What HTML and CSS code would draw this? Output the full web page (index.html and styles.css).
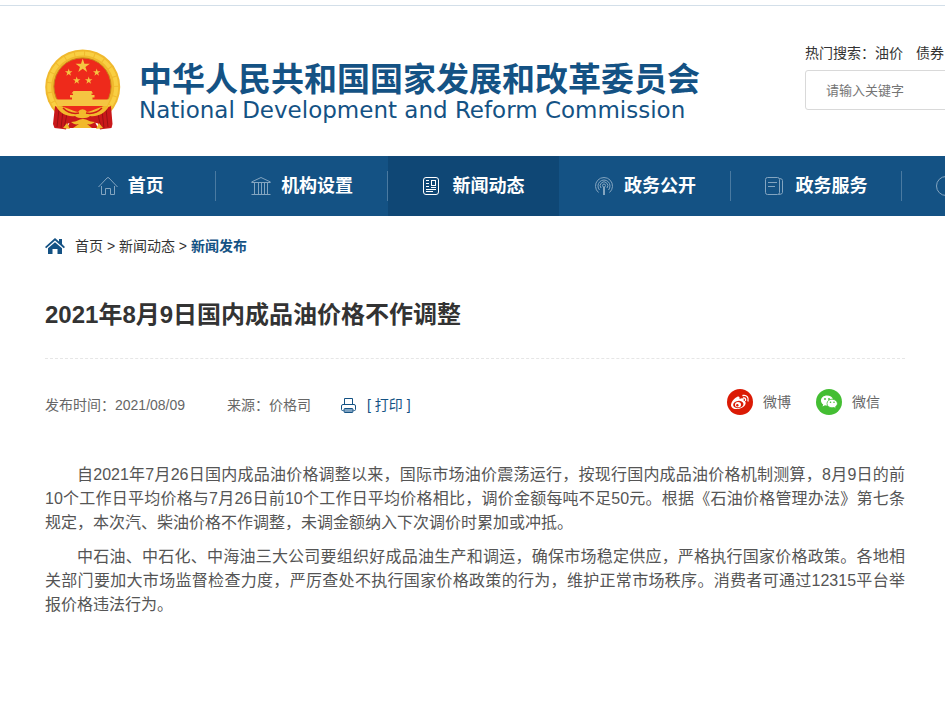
FILE: index.html
```html
<!DOCTYPE html>
<html lang="zh-CN">
<head>
  <meta charset="UTF-8">
  <title>2021年8月9日国内成品油价格不作调整</title>
  <link rel="stylesheet" href="styles.css">
</head>
<body>

  <header class="header">
    <div class="header-inner">
      <a class="logo" href="#">
        <svg class="emblem" viewBox="0 0 76 81" aria-hidden="true">
          <defs>
            <path id="star" d="M0-1L.225-.309H.951L.363.118.588.809 0 .382-.588.809-.363.118-.951-.309H-.225Z"/>
          </defs>
          <circle cx="37.7" cy="38" r="37.5" fill="#f0b92e"/>
          <circle cx="37.7" cy="38" r="33.500" fill="none" stroke="#f9cf42" stroke-width="4" stroke-dasharray="9 1"/>
          <circle cx="37.5" cy="37.5" r="28.6" fill="#ee2a1b" stroke="#c98418" stroke-width="1"/>
          <g fill="#f5c542">
            <use href="#star" transform="translate(37.7 17) scale(7.5)"/>
            <use href="#star" transform="translate(23.7 23.5) scale(3.9)"/>
            <use href="#star" transform="translate(51.7 23.5) scale(3.9)"/>
            <use href="#star" transform="translate(31.7 31.5) scale(3.9)"/>
            <use href="#star" transform="translate(43.7 31.5) scale(3.9)"/>
            <path d="M28.500 42h18l1.500 2.500h-1.500V46h3v2.500h-2v2H65L62 57H13l-3-6.500h17v-2h-2V46h3v-1.500h-1.500Z"/>
          </g>
          <path d="M10 57l12 5 15.500 6L53 62l13-5 1.500 18-1 4-8.500 1-3 .5-2-6-15-4-15 4-2 6-3-.5-8.500-1-1.500-4Z" fill="#c9181a"/>
          <path d="M14 60l-2 18M18 62l-2 17M22 65l-3 14M61 60l2 18M57 62l2 17M53 65l3 14" stroke="#8f0f12" stroke-width=".8"/>
          <path d="M11 57c10 0 16 5 22 6a5 5 0 0 1 9 0c6-1 12-6 22-6-4 8-12 11-19 10-3 3-12 3-15 0-7 1-15-2-19-10Z" fill="#f2b92c"/>
          <path d="M18 59c5 5 11 6 16 5M57 59c-5 5-11 6-16 5" fill="none" stroke="#d01b18" stroke-width="1.500"/>
          <path d="M25 73l12-3 13 3 3 6H22Z" fill="#c9181a"/>
          <path d="M26 73c7 0 7-3 12-3s5 3 12 3c-3 2-5 3-8 2l5 4H28l6-4c-4 1-5 0-8-2Z" fill="#f2b92c"/>
          <path d="M18 79l4-5 3 6ZM58 79l-4-5-3 6Z" fill="#f2b92c"/>
        </svg>
        <span class="logo-text">
          <span class="logo-cn">中华人民共和国国家发展和改革委员会</span>
          <span class="logo-en">National Development and Reform Commission</span>
        </span>
      </a>
      <form class="search">
        <div class="hot">
          <span>热门搜索：</span>
          <a href="#">油价</a>
          <a href="#">债券</a>
        </div>
        <input class="search-input" type="text" placeholder="请输入关键字" aria-label="请输入关键字">
      </form>
    </div>
  </header>

  <nav class="nav">
    <div class="nav-inner">
      <a class="nav-item" href="#">
        <svg class="nav-icon" viewBox="0 0 20 20"><path d="M.5 11L9 2q1-1 2 0l8.500 9M3.500 10v8.500h4v-6h5v6h4V10"/></svg>
        首页
      </a>
      <a class="nav-item" href="#">
        <svg class="nav-icon" viewBox="0 0 20 20"><path d="M.5 6L10 1.500 19.500 6M.5 6.500h19M3.500 7v11M7.500 7v11M10.500 7v11M13.500 7v11M16.500 7v11M.5 18.500h19"/></svg>
        机构设置
      </a>
      <a class="nav-item active" href="#">
        <svg class="nav-icon" viewBox="0 0 20 20"><rect x=".5" y="1.500" width="15" height="17" rx="2.500"/><rect x="8.500" y="4.500" width="4" height="5"/><path d="M3 4.500h3M3 7.500h3M3 10.500h3M8 11.500h5M3 13.500h10M3 15.500h7"/></svg>
        新闻动态
      </a>
      <a class="nav-item" href="#">
        <svg class="nav-icon" viewBox="0 0 20 20"><path d="M4.500 16.500a8.500 8.500 0 1 1 11 0M5.500 14a6 6 0 1 1 9 0M7 12a3.800 3.800 0 1 1 6 0"/><circle cx="10" cy="9.500" r="1.500"/><path d="M9.500 11v8M10.500 11v8"/></svg>
        政务公开
      </a>
      <a class="nav-item" href="#">
        <svg class="nav-icon" viewBox="0 0 20 20"><rect x=".5" y="1.500" width="14" height="17" rx="2"/><path d="M14.500 2.500q3 0 3 2v12q0 2-4 2M3 6.500h9M3 10.500h7"/></svg>
        政务服务
      </a>
      <a class="nav-item nav-item-more" href="#" aria-label="更多">
        <svg class="nav-icon" viewBox="0 0 20 20"><circle cx="10" cy="10" r="9.500"/></svg>
      </a>
    </div>
  </nav>

  <main class="main">
    <div class="crumbs">
      <svg class="crumb-icon" viewBox="0 0 20 17" aria-hidden="true"><path d="M10 0l4 3.500V1h3v5l3 3-1.200 1.200L10 2.500 1.200 10.200 0 9ZM10 4.200l7 6V16h-4.500v-5h-5v5H3v-5.800Z"/></svg>
      <div>
        <a href="#">首页</a> &gt; <a href="#">新闻动态</a> &gt; <a class="current" href="#">新闻发布</a>
      </div>
    </div>

    <h1 class="title">2021年8月9日国内成品油价格不作调整</h1>

    <div class="meta">
      <div class="meta-info">
        <span>发布时间：2021/08/09</span>
        <span>来源：价格司</span>
        <button class="print" type="button">
          <svg class="print-icon" viewBox="0 0 16 16" aria-hidden="true"><path d="M3.500 7.500v-6h8v6M2.500 13.500h-1q-1 0-1-1V9q0-1.500 1.500-1.500h11q1.500 0 1.500 1.500v3.500q0 1-1 1h-1"/><rect x="3" y="11.500" width="9" height="4" rx="1" fill="#7fa3c2"/></svg>
          [ 打印 ]
        </button>
      </div>
      <div class="share">
        <a class="share-link" href="#">
          <svg class="share-icon" viewBox="0 0 26 26" aria-hidden="true">
            <circle cx="13" cy="13" r="13" fill="#db1a05"/>
            <path d="M10 8c2-1 3 0 2.500 2 3-1.500 5-.5 4 1.500 2 .5 2.500 2 2 3.500-2 6-14 7-14.500 1.500C4 13 7.500 9 10 8Z" fill="#fff"/>
            <ellipse cx="11.300" cy="15.500" rx="5.200" ry="3.600" fill="#db1a05" transform="rotate(-8 11.300 15.500)"/>
            <ellipse cx="11" cy="15.700" rx="3" ry="2.600" fill="#fff"/>
            <circle cx="10.300" cy="16.200" r="1.200" fill="#db1a05"/>
            <path d="M16 6.500c3.500-.8 6 2 5 5.500M16.500 9c1.500-.3 2.500.8 2 2.500" fill="none" stroke="#fff" stroke-width="1.300" stroke-linecap="round"/>
          </svg>
          微博
        </a>
        <a class="share-link" href="#">
          <svg class="share-icon" viewBox="0 0 26 26" aria-hidden="true">
            <circle cx="13" cy="13" r="13" fill="#44be33"/>
            <path d="M11 6.500c-3.500 0-6 2.200-6 5 0 1.700.8 3 2.200 4L6.500 17.500l2.500-1.300c1 .3 2 .3 3 .2l5-6c-.5-2.300-3-3.900-6-3.900Z" fill="#fff"/>
            <path d="M16 10.200c-2.800 0-5 1.900-5 4.300s2.200 4.300 5 4.300c.7 0 1.400-.1 2-.3l2 1.200-.5-2c1.200-.8 1.900-2 1.900-3.200 0-2.400-2.500-4.300-5.400-4.300Z" fill="#fff" stroke="#44be33" stroke-width=".8"/>
            <g fill="#44be33"><circle cx="9" cy="10" r=".9"/><circle cx="13" cy="10" r=".9"/><circle cx="14.500" cy="13.300" r=".8"/><circle cx="18" cy="13.300" r=".8"/></g>
          </svg>
          微信
        </a>
      </div>
    </div>

    <article class="article">
      <p>自2021年7月26日国内成品油价格调整以来，国际市场油价震荡运行，按现行国内成品油价格机制测算，8月9日的前10个工作日平均价格与7月26日前10个工作日平均价格相比，调价金额每吨不足50元。根据《石油价格管理办法》第七条规定，本次汽、柴油价格不作调整，未调金额纳入下次调价时累加或冲抵。</p>
      <p>中石油、中石化、中海油三大公司要组织好成品油生产和调运，确保市场稳定供应，严格执行国家价格政策。各地相关部门要加大市场监督检查力度，严厉查处不执行国家价格政策的行为，维护正常市场秩序。消费者可通过12315平台举报价格违法行为。</p>
    </article>
  </main>

</body>
</html>
```

FILE: styles.css
```css
body {
  margin: 0;
  padding-top: 5px;
  font-family: "Liberation Sans", "Noto Sans CJK SC", sans-serif;
  font-size: 14px;
  line-height: 20px;
  color: #333;
  background: #fff;
}
a {
  color: inherit;
  text-decoration: none;
}

/* header */
.header {
  border-top: 1px solid #d3dfe9;
  overflow: hidden;
}
.header-inner {
  display: flex;
  justify-content: space-between;
  align-items: flex-start;
  width: 1200px;
  height: 150px;
  padding-left: 45px;
}
.logo {
  display: flex;
  gap: 18px;
  padding-top: 43px;
  color: #145284;
}
.emblem {
  width: 76px;
  height: 81px;
}
.logo-text {
  display: flex;
  flex-direction: column;
  padding-top: 13px;
  white-space: nowrap;
}
.logo-cn {
  font-size: 33px;
  font-weight: bold;
  line-height: 36px;
}
.logo-en {
  font-family: "DejaVu Sans", sans-serif;
  font-size: 23px;
  line-height: 24px;
}
.search {
  width: 440px;
  padding-top: 37px;
}
.hot {
  display: flex;
  margin-bottom: 7px;
}
.hot a {
  margin-right: 13px;
}
.search-input {
  box-sizing: border-box;
  width: 100%;
  height: 40px;
  padding: 0 20px;
  border: 1px solid #d9d9d9;
  border-radius: 3px;
  font-family: inherit;
  font-size: 13px;
}
.search-input::placeholder {
  color: #757575;
}

/* nav */
.nav {
  background: #145284;
  overflow: hidden;
}
.nav-inner {
  display: grid;
  grid-template-columns: repeat(7, 1fr);
  width: 1200px;
  padding-left: 45px;
}
.nav-item {
  position: relative;
  display: flex;
  gap: 10px;
  align-items: center;
  justify-content: center;
  height: 60px;
  font-size: 18px;
  font-weight: bold;
  color: #fff;
}
.nav-item::after {
  content: "";
  position: absolute;
  top: 15px;
  right: 0;
  width: 1px;
  height: 30px;
  background: #4a7aa1;
}
.nav-item.active {
  background: #0f4775;
}
.nav-item.active::after {
  display: none;
}
.nav-item-more {
  justify-content: flex-start;
  padding-left: 34px;
}
.nav-icon {
  width: 20px;
  height: 20px;
  fill: none;
  stroke: #84a5c0;
  stroke-width: 1;
}
.active .nav-icon {
  stroke: #fff;
}

/* content */
.main {
  padding: 20px 40px 40px 45px;
}
.crumbs {
  display: flex;
  align-items: center;
  gap: 10px;
}
.crumb-icon {
  width: 20px;
  height: 17px;
  fill: #145284;
}
.current {
  font-weight: bold;
  color: #145284;
}
.title {
  margin: 41px 0 0;
  padding-bottom: 25px;
  border-bottom: 1px dashed #e6e6e6;
  font-size: 24px;
  line-height: 36px;
}
.meta {
  display: flex;
  justify-content: space-between;
  padding: 30px 25px 0 0;
  color: #666;
}
.meta-info {
  display: flex;
  align-items: center;
  gap: 42px;
  padding-top: 6px;
}
.print {
  display: flex;
  align-items: center;
  gap: 10px;
  margin-left: -12px;
  padding: 0;
  border: 0;
  background: none;
  font: inherit;
  color: #145284;
}
.print-icon {
  width: 16px;
  height: 16px;
  fill: none;
  stroke: #145284;
}
.share {
  display: flex;
  gap: 25px;
}
.share-link {
  display: flex;
  align-items: center;
  gap: 10px;
}
.share-icon {
  width: 26px;
  height: 26px;
}
.article {
  padding-top: 48px;
  font-size: 16px;
  line-height: 24px;
  color: #555;
  text-align: justify;
  text-spacing-trim: space-all;
}
.article p {
  margin: 0 0 10px;
  text-indent: 2em;
}
```
